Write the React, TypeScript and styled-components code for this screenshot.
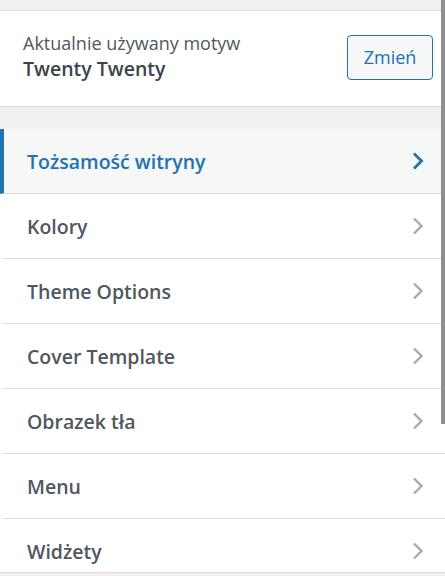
import styled, { createGlobalStyle } from "styled-components";

const GlobalStyle = createGlobalStyle`
    * {
        box-sizing: border-box;
    }
    body {
        margin: 0;
        background: #f0f0f1;
        font-family: "Open Sans", "Noto Sans", sans-serif;
        overflow: hidden;
    }
`;

const sections = [
    "Tożsamość witryny",
    "Kolory",
    "Theme Options",
    "Cover Template",
    "Obrazek tła",
    "Menu",
    "Widżety",
];

function Chevron({ active }: { active?: boolean }) {
    return (
        <svg width="14" height="20" viewBox="0 0 14 20" fill="none">
            <path
                d="M3 2.5 L10.5 10 L3 17.5"
                stroke={active ? "#2271b1" : "#a7aaad"}
                strokeWidth={active ? 2.8 : 2.4}
                strokeLinecap="butt"
                strokeLinejoin="miter"
            />
        </svg>
    );
}

function App() {
    return (
        <Page>
            <GlobalStyle />
            <Panel>
                <ThemeInfo>
                    <div>
                        <Label>Aktualnie używany motyw</Label>
                        <ThemeName>Twenty Twenty</ThemeName>
                    </div>
                    <ChangeButton>Zmień</ChangeButton>
                </ThemeInfo>
                <SectionList>
                    {sections.map((title, i) => (
                        <Section key={title} $active={i === 0}>
                            <SectionTitle $active={i === 0}>{title}</SectionTitle>
                            <Chevron active={i === 0} />
                        </Section>
                    ))}
                </SectionList>
            </Panel>
            <ScrollThumb />
        </Page>
    );
}

const Page = styled.div`
    position: relative;
    width: 445px;
    height: 576px;
    padding-top: 10px;
    background: #f0f0f1;
    overflow: hidden;
`;

const Panel = styled.div`
    height: 563px;
    overflow: hidden;
    border-bottom: 1px solid #dcdcde;
`;

const ThemeInfo = styled.div`
    display: flex;
    justify-content: space-between;
    align-items: center;
    height: 97px;
    padding: 0 12px 0 23px;
    background: #fff;
    border-top: 1px solid #dcdcde;
    border-bottom: 1px solid #dcdcde;
`;

const Label = styled.div`
    font-size: 18px;
    color: #50575e;
    line-height: 24px;
    margin-top: -4px;
`;

const ThemeName = styled.div`
    font-size: 19.5px;
    font-weight: 600;
    color: #3c434a;
    line-height: 28px;
`;

const ChangeButton = styled.button`
    width: 86px;
    height: 45px;
    margin-top: -3px;
    border: 1px solid #2271b1;
    border-radius: 4px;
    background: #f6f7f7;
    color: #2271b1;
    font-family: inherit;
    font-size: 18px;
    cursor: pointer;
`;

const SectionList = styled.ul`
    list-style: none;
    margin: 22px 0 0;
    padding: 0;
`;

const Section = styled.li<{ $active?: boolean }>`
    display: flex;
    justify-content: space-between;
    align-items: center;
    height: 65px;
    padding: 0 20px 0 23px;
    background: ${(props) => (props.$active ? "#f6f7f7" : "#fff")};
    border-left: 4px solid ${(props) => (props.$active ? "#2271b1" : "#fff")};
    border-bottom: 1px solid #dcdcde;
`;

const SectionTitle = styled.span<{ $active?: boolean }>`
    font-size: 19.5px;
    font-weight: 600;
    color: ${(props) => (props.$active ? "#2271b1" : "#50575e")};
`;

const ScrollThumb = styled.div`
    position: absolute;
    top: 0;
    right: 0;
    width: 4px;
    height: 424px;
    background: #8c8f94;
`;

export default App;
